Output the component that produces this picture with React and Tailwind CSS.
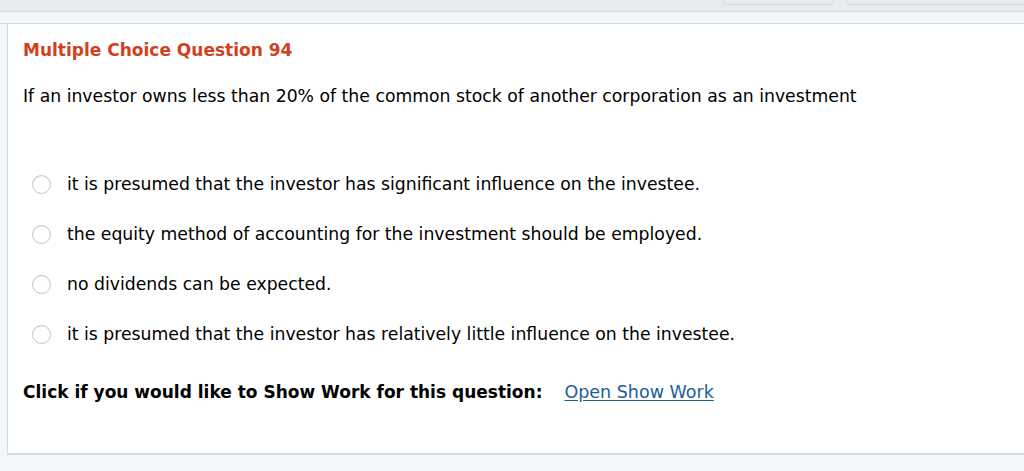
import React, { useState } from 'react';

const options = [
  'it is presumed that the investor has significant influence on the investee.',
  'the equity method of accounting for the investment should be employed.',
  'no dividends can be expected.',
  'it is presumed that the investor has relatively little influence on the investee.',
];

const App = () => {
  const [choice, setChoice] = useState(null);

  return (
    <div className="w-[1024px] h-[471px] overflow-hidden bg-[#f4f7fa] text-black" style={{ fontFamily: '"DejaVu Sans", Verdana, sans-serif' }}>
      {/* top tab strip */}
      <div className="h-[12px] bg-[#e6ebf0] border-b border-[#d3d9e0] flex items-start">
        <div className="ml-[723px] w-[111px] h-[5px] bg-[#e9edf1] border-x border-b border-[#d3d9e0] rounded-b-[5px]" />
        <div className="ml-[12px] flex-1 h-[5px] bg-[#e9edf1] border-l border-b border-[#d3d9e0] rounded-bl-[5px]" />
      </div>
      <div className="h-[12px] border-b border-[#d3d9e0]" />

      <div className="ml-[7px] h-[431px] bg-white border-l border-b-2 border-[#d5dbe2] pl-[15px] pt-[16px]">
        <h1 className="text-[17px] leading-[20px] font-bold text-[#d2411b]">Multiple Choice Question 94</h1>
        <p className="mt-[26px] text-[17.25px] leading-[20px]">
          If an investor owns less than 20% of the common stock of another corporation as an investment
        </p>

        <div className="mt-[68px] flex flex-col gap-[30px]">
          {options.map((o, i) => (
            <label key={i} className="flex items-center h-[20px] cursor-pointer" onClick={() => setChoice(i)}>
              <span className="ml-[9px] w-[19px] h-[19px] rounded-full border border-[#c4c4c4] bg-white shadow-[inset_0_1px_1px_rgba(0,0,0,0.06)] flex items-center justify-center">
                {choice === i && <span className="w-[9px] h-[9px] rounded-full bg-[#3b7ddd]" />}
              </span>
              <span className="ml-[16px] text-[17.25px] leading-[20px]">{o}</span>
            </label>
          ))}
        </div>

        <div className="mt-[38px] flex items-center leading-[20px]">
          <span className="font-bold text-[17px]">Click if you would like to Show Work for this question:</span>
          <a href="#" className="ml-[22px] text-[17.5px] text-[#1b5e96] underline underline-offset-2">Open Show Work</a>
        </div>
      </div>
    </div>
  );
};

export default App;
